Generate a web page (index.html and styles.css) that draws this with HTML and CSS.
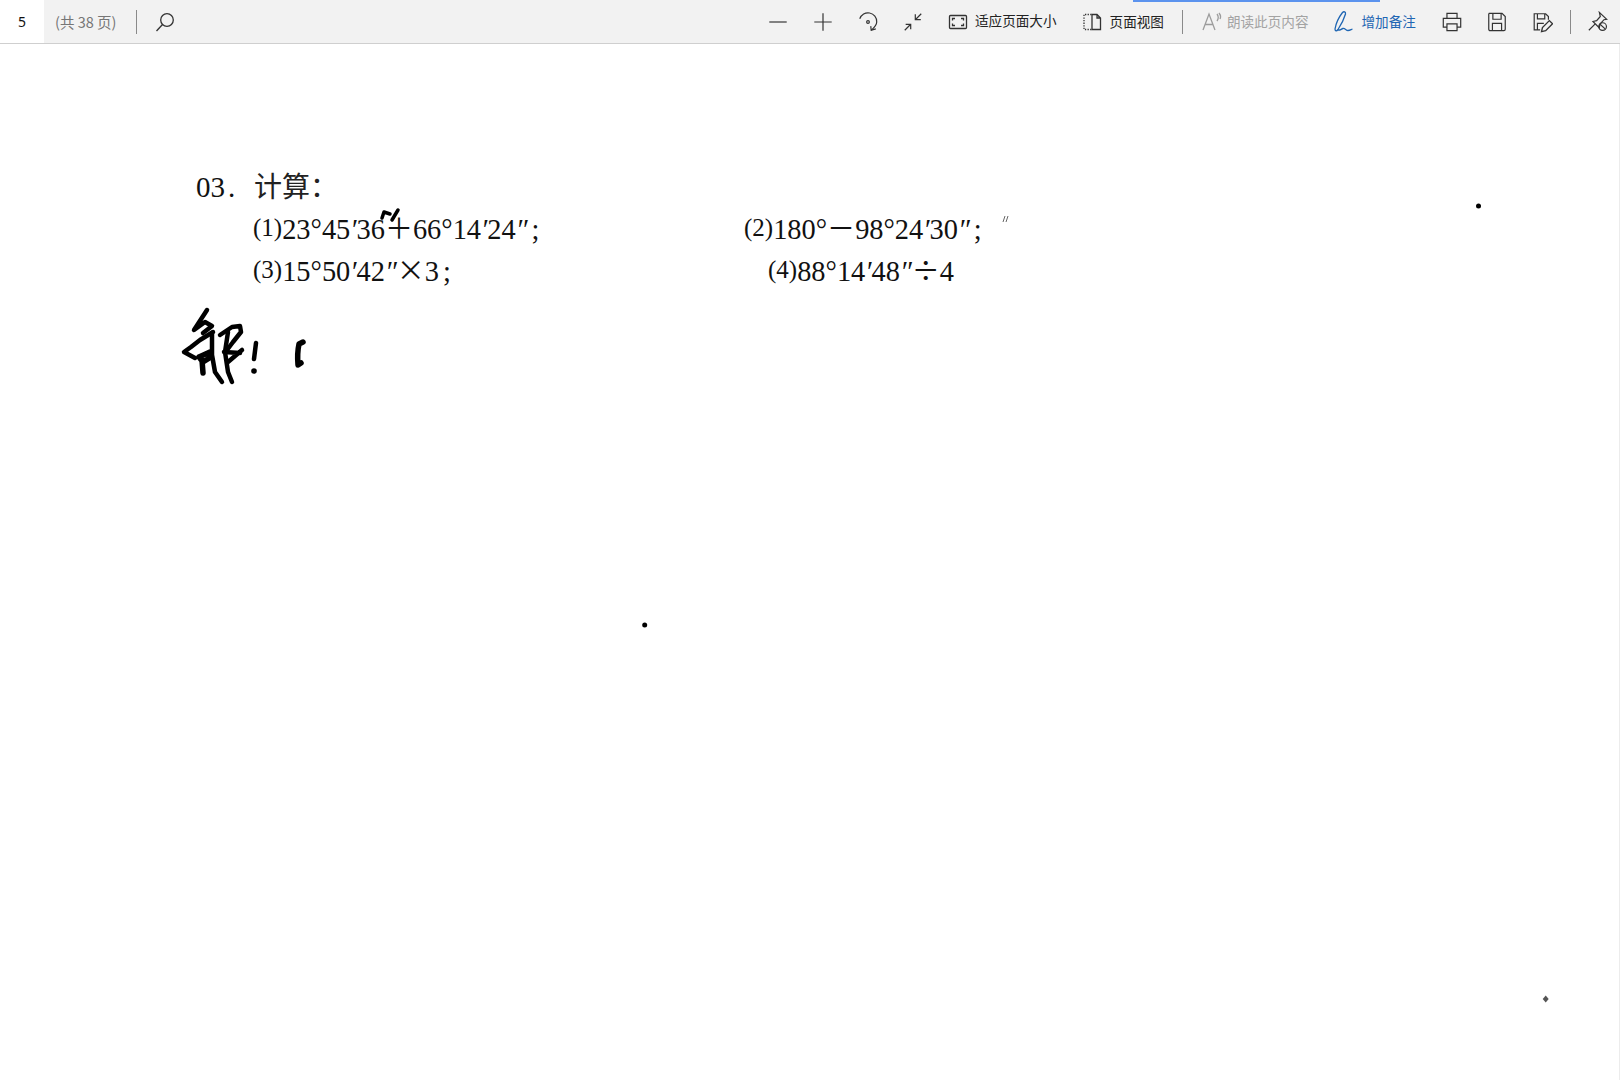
FILE: index.html
```html
<!DOCTYPE html>
<html lang="zh-CN">
<head>
<meta charset="utf-8">
<title>PDF</title>
<link rel="stylesheet" href="styles.css">
</head>
<body>
<header class="toolbar">
  <div class="progress"></div>
  <div class="page-input">5</div>
  <div class="page-total">(共 38 页)</div>
  <div class="sep sep-left"></div>
  <button class="btn-search">
    <svg width="22" height="24" viewBox="0 0 22 24"><circle cx="13" cy="10" r="6.3"/><path d="M8.5 14.5 2.5 21"/></svg>
  </button>
  <div class="tools">
    <button class="icon-btn"><svg viewBox="0 0 24 24"><path d="M2.5 12h19"/></svg></button>
    <button class="icon-btn"><svg viewBox="0 0 24 24"><path d="M2.5 12h19M12 2.5v19"/></svg></button>
    <button class="icon-btn"><svg viewBox="0 0 24 24"><path d="M3 8.500A9.500 9.500 0 0 1 21.500 12c0 3-2.500 6-6 9"/><circle cx="12" cy="12" r="1.500"/><path d="M15 16.500l.5 4.500 5-1.500"/></svg></button>
    <button class="icon-btn"><svg viewBox="0 0 24 24"><path d="M21 3l-6.500 6.500M14.500 3.500v6h6M3 21l6.500-6.500M4 14.500h5.500V20"/></svg></button>
    <button class="text-btn fit">
      <svg viewBox="0 0 20 20"><rect x="1.500" y="3.500" width="17" height="13" rx="1"/><path d="M4.500 8.500v-2h2.500M15.500 8.500v-2h-2.500M4.500 11.500v2h2.500M15.500 11.500v2h-2.500"/></svg>
      <span>适应页面大小</span>
    </button>
    <button class="text-btn view">
      <svg viewBox="0 0 20 20"><path class="dotted" d="M9.500 2.500H2v15h7.500"/><path d="M10 2.500h5l3.500 3.500v11.500H10zM15 2.500V6h3.500"/></svg>
      <span>页面视图</span>
    </button>
    <div class="sep sep-mid"></div>
    <button class="text-btn read">
      <svg viewBox="0 0 20 20"><path d="M1 18 7 2l6 16M3.300 12.500h7.400M15 2q2.500 3.500 0 7M17 1q2.500 3 1 6"/></svg>
      <span>朗读此页内容</span>
    </button>
    <button class="text-btn note">
      <svg viewBox="0 0 24 24"><path d="M11.500 2.500C8 7 5 13 4 19c0 2 1.500 2.500 3 .500C10 15 13 9 14.500 4c.3-2-1.500-3-3-1.500ZM6 20c3 1 4-1 6-1.500 2-.5 3 2 5 2 2 0 3-1 4.500-1.500"/></svg>
      <span>增加备注</span>
    </button>
    <button class="icon-btn"><svg viewBox="0 0 24 24"><path d="M6.500 8V2.500h11V8M6.500 17.500H2.500V8h19v9.500h-4M6.500 14h11v7.500h-11z"/></svg></button>
    <button class="icon-btn"><svg viewBox="0 0 24 24"><path d="M3.500 2.500h14l3.500 3.500v14a1.500 1.500 0 0 1-1.500 1.500h-15A1.500 1.500 0 0 1 3 20V3.500zM7.500 3v6h9V3M7 21.500V13.500h10v8"/></svg></button>
    <button class="icon-btn"><svg viewBox="0 0 24 24"><path d="M10 20.500H3.500V3h12.500l3 3v3.500M7 3.500v5h8v-5M7 20v-6.500h7"/><path class="pencil" d="M11.500 22.500l1-4.500 7.500-7.500 3.500 3.500-7.500 7.500z"/></svg></button>
    <div class="sep sep-right"></div>
    <button class="icon-btn"><svg viewBox="0 0 24 24"><path d="M13.500 1.500l8 7.500-3 .5-4.500 5-.5 4-7-7 4-1 4-4.500zM9 14l-7 7"/><circle cx="17" cy="17" r="4.200"/><path d="M14.200 14.500l5.600 5"/></svg></button>
  </div>
</header>

<main class="sheet">
  <h1 class="heading"><span class="num">03</span><span class="dot">.</span><span class="cjk">计算：</span></h1>
  <div class="problems">
    <p class="problem"><span class="paren">(1)</span>23°45<i>′</i>36<span class="op">＋</span>66°14<i>′</i>24<i>″</i><span class="semi">;</span></p>
    <p class="problem"><span class="paren">(2)</span>180°<span class="op">－</span>98°24<i>′</i>30<i>″</i><span class="semi">;</span></p>
    <p class="problem"><span class="paren">(3)</span>15°50<i>′</i>42<i>″</i><span class="op">×</span>3<span class="semi">;</span></p>
    <p class="problem shifted"><span class="paren">(4)</span>88°14<i>′</i>48<i>″</i><span class="op">÷</span>4</p>
  </div>
  <svg class="ink" viewBox="0 0 1620 1036" aria-hidden="true">
    <path class="stroke thin" d="M382 174 384 168 390 170M392 176 398 166"/>
    <g transform="translate(170 251)">
      <path class="stroke" d="M37 15 24 35 35 27 42 31 33 38"/>
      <path class="stroke" d="M43 37 30 45 21 52 14 57 25 63"/>
      <path class="stroke fat" d="M29 62 40 57 41 62 33 67 29 62M32 65 33 78"/>
      <path class="stroke" d="M42 38 42 60 45 77 52 87"/>
      <path class="stroke" d="M50 40 62 32 70 31 71 37 63 47 57 55"/>
      <path class="stroke" d="M58 37 55 57 58 77 62 87"/>
      <path class="stroke" d="M54 57 70 58M58 67 72 55"/>
      <path class="stroke" d="M86 48 84 64"/>
      <circle class="blot" cx="84" cy="76" r="2.800"/>
      <path class="stroke fat" d="M133 47 129 49Q127 58 128 70L131 68"/>
    </g>
    <path class="faint" d="M1005 172 1003 178M1008 172 1006 178"/>
    <circle class="blot" cx="1478.500" cy="162" r="2.500"/>
    <circle class="blot" cx="644.700" cy="581" r="2.500"/>
    <path class="speck" d="M1545.700 951.500l3 3.500-3 3.500-3-3.500z"/>
  </svg>
</main>
</body>
</html>
```
FILE: styles.css
```css
* { box-sizing: border-box; }
html, body { margin: 0; height: 100%; background: #fff; overflow: hidden; }
body { font-family: "Noto Sans CJK SC", "Noto Sans", sans-serif; color: #000; }

.toolbar {
  position: relative;
  display: flex;
  align-items: center;
  height: 44px;
  background: #f2f2f2;
  border-bottom: 1px solid #cfcfcf;
  font-size: 13.600px;
  color: #222;
}
.progress {
  position: absolute;
  top: 0;
  left: 1133px;
  width: 247px;
  height: 2px;
  background: #5b93ee;
}
.page-input {
  width: 44px;
  height: 43px;
  line-height: 43px;
  text-align: center;
  background: #fff;
  color: #111;
  font-family: "Noto Sans", sans-serif;
  font-size: 14px;
}
.page-total { margin-left: 11px; color: #767676; font-size: 14.500px; white-space: nowrap; }
.sep { width: 1px; height: 24px; background: #8a8a8a; flex: none; }
.sep-left { margin-left: 20px; }
.btn-search {
  display: flex;
  margin-left: 17px;
  padding: 0;
  border: 0;
  background: none;
}
button { font: inherit; color: inherit; }
svg { fill: none; stroke: #333; stroke-width: 1.300; flex: none; }
.tools { margin-left: auto; display: flex; align-items: center; width: 865px; }
.icon-btn {
  width: 45px;
  height: 43px;
  padding: 0;
  border: 0;
  background: none;
  display: flex;
  align-items: center;
  justify-content: center;
  flex: none;
}
.icon-btn svg { width: 22px; height: 22px; }
.text-btn {
  display: flex;
  align-items: center;
  gap: 7px;
  height: 43px;
  padding: 0 15px 0 13px;
  border: 0;
  background: none;
  white-space: nowrap;
  flex: none;
}
.text-btn span { padding-bottom: 3px; }
.text-btn svg { width: 20px; height: 20px; }
.view { padding-left: 10px; padding-right: 13px; gap: 8px; }
.view span { padding-bottom: 1px; }
.dotted { stroke-dasharray: 1.300 1.300; }
.pencil { stroke-width: 1.500; fill: #f2f2f2; }
.sep-mid { margin: 0 5px; }
.read { padding-left: 14px; padding-right: 12px; gap: 5px; color: #a3a3a3; }
.read span { padding-bottom: 2px; }
.read svg { stroke: #9c9c9c; }
.note { padding-left: 10px; padding-right: 14px; color: #1f66b3; }
.note span { padding-bottom: 2px; }
.note svg { width: 24px; height: 24px; stroke: #1f66b3; }
.sep-right { margin-left: 5px; margin-right: 5px; }

.sheet {
  position: relative;
  height: 1036px;
  padding: 119px 0 0 196px;
  font-family: "Liberation Serif", "Noto Sans CJK SC", serif;
  font-size: 28.400px;
  color: #111;
  border-right: 1px solid #ececec;
}
.heading {
  display: flex;
  align-items: baseline;
  margin: 0;
  height: 43px;
  font-size: 29px;
  font-weight: 400;
  line-height: 44px;
}
.num { width: 32px; }
.dot { width: 26px; }
.cjk { font-family: "Noto Sans CJK SC", sans-serif; font-size: 28px; color: #222; }
.problems {
  display: grid;
  grid-template-columns: 491px 1fr;
  grid-auto-rows: 42px;
  margin-left: 57px;
  line-height: 43px;
}
.problem { margin: 0; white-space: nowrap; }
.shifted { padding-left: 24px; }
.paren { font-size: 25px; position: relative; top: -3px; }
.problem i { font-style: italic; }
.semi { margin-left: 4px; }
.op { font-family: "Noto Sans CJK SC", sans-serif; font-size: 28px; font-weight: 400; }
.ink { position: absolute; left: 0; top: 0; width: 1620px; height: 1036px; }
.stroke { stroke: #000; stroke-width: 4.500; stroke-linecap: round; stroke-linejoin: round; fill: none; }
.stroke.thin { stroke-width: 3.500; }
.stroke.fat { stroke-width: 5.500; }
.blot { fill: #000; stroke: none; }
.faint { stroke: #666; stroke-width: 1; }
.speck { fill: #555; stroke: none; }
```
